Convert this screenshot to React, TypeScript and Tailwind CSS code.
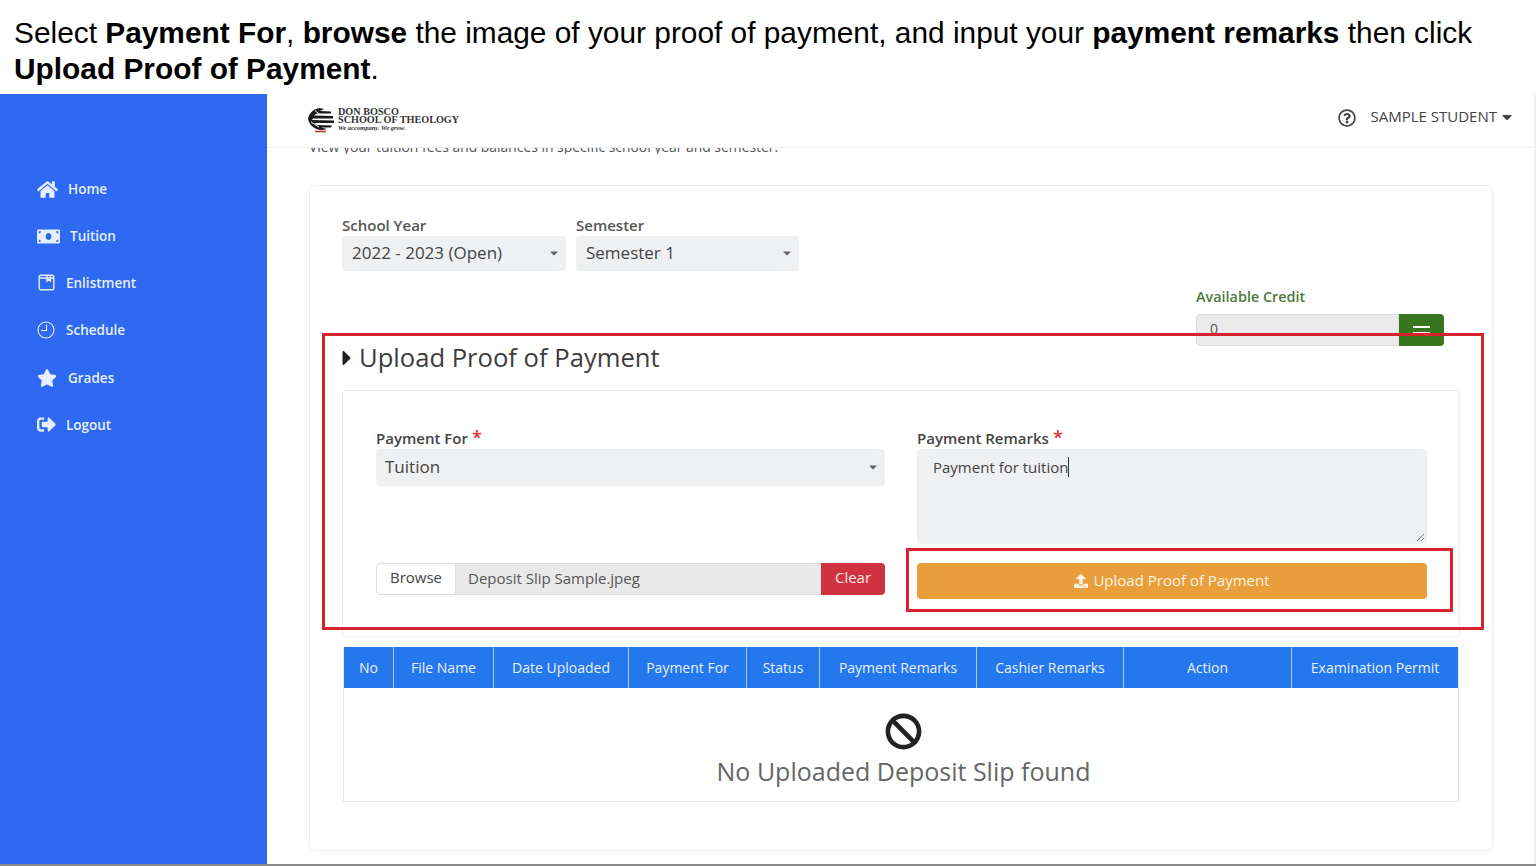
import { FaBan, FaHome, FaMoneyBill, FaSignOutAlt, FaStar, FaRegQuestionCircle, FaCaretDown, FaCaretRight, FaUpload } from "react-icons/fa";

function EnlistIcon() {
  return (
    <svg width="17" height="17" viewBox="0 0 17 17" fill="none" stroke="currentColor" strokeWidth="1.4" className="ml-[1px] -mt-[2px]">
      <rect x="1.2" y="1.2" width="14.6" height="14.6" rx="1.5" />
      <path d="M1.2 4 H15.8 M9 1.2 V7 L10.7 5.6 L12.4 7 V1.2" />
    </svg>
  );
}

function ClockIcon() {
  return (
    <svg width="18" height="18" viewBox="0 0 18 18" fill="none" stroke="currentColor" strokeWidth="1.1" className="-mt-[2px]">
      <circle cx="9" cy="9" r="8" />
      <path d="M9.5 3.5 V9.5 H4" />
    </svg>
  );
}

const navItems = [
  { label: "Home", icon: <FaHome size={21} />, gap: "gap-[10px]" },
  { label: "Tuition", icon: <FaMoneyBill size={23} />, gap: "gap-[10px]" },
  { label: "Enlistment", icon: <EnlistIcon />, gap: "gap-[11px]" },
  { label: "Schedule", icon: <ClockIcon />, gap: "gap-[11px]" },
  { label: "Grades", icon: <FaStar size={20} />, gap: "gap-[11px]" },
  { label: "Logout", icon: <FaSignOutAlt size={19} />, gap: "gap-[10px]" },
];

const columns = [
  { label: "No", w: "w-[50px]" },
  { label: "File Name", w: "w-[100px]" },
  { label: "Date Uploaded", w: "w-[135px]" },
  { label: "Payment For", w: "w-[118px]" },
  { label: "Status", w: "w-[73px]" },
  { label: "Payment Remarks", w: "w-[157px]" },
  { label: "Cashier Remarks", w: "w-[147px]" },
  { label: "Action", w: "w-[168px]" },
  { label: "Examination Permit", w: "flex-1" },
];

function Caret() {
  return <FaCaretDown size={12} className="text-[#666]" />;
}

function Logo() {
  return (
    <div className="flex items-center gap-[4px] -mt-[2px] -ml-[1px]">
      <svg width="27" height="26" viewBox="0 0 27 26">
        <path d="M1 12 C2 6 6 2 13 1 L17 2 L13 4 L24 4.5 L24 6.5 L10 6.5 L6.5 8.5 L26 9 L26 11.5 L6 11.5 L5 13 L27 13.5 L27 16 L7 16 L10 18 L25 18.5 L24 20.5 L14 20.5 L20 22 C12 25 3 21 1 12Z" fill="#1c1c1c" />
        <path d="M8 3.5 L12 7 M4 15 L12 20" stroke="#fff" strokeWidth="1" />
        <path d="M8 24.5 L19 24.5" stroke="#c0392b" strokeWidth="1.6" />
      </svg>
      <div className="flex flex-col font-['Liberation_Serif',serif] font-bold text-[#333] leading-[8px]">
        <span className="text-[10.2px]">DON BOSCO</span>
        <span className="text-[10.2px] whitespace-nowrap">SCHOOL OF THEOLOGY</span>
        <span className="text-[6.5px] italic">We accompany. We grow.</span>
      </div>
    </div>
  );
}

export default function App() {
  return (
    <div className="relative w-[1536px] h-[866px] overflow-hidden bg-white font-['Open_Sans',sans-serif] text-[#444]">
      {/* slide caption */}
      <div className="h-[94px] px-[14px] pt-[15px] font-['Liberation_Sans',sans-serif] text-[29.85px] leading-[36px] text-black whitespace-nowrap">
        Select <b>Payment For</b>, <b>browse</b> the image of your proof of payment, and input your <b>payment remarks</b> then click <br />
        <b>Upload Proof of Payment</b>.
      </div>

      <div className="flex h-[772px]">
        <aside className="w-[267px] shrink-0 bg-[#2f69f2] pl-[37px] pt-[83px] text-white">
          <nav className="flex flex-col gap-[23.2px]">
            {navItems.map((item) => (
              <div key={item.label} className={`flex items-center h-[24px] text-[13.5px] font-semibold text-[#e6eeff] ${item.gap}`}>
                {item.icon}
                <span>{item.label}</span>
              </div>
            ))}
          </nav>
        </aside>

        <main className="flex-1 flex flex-col min-w-0 border-r-2 border-[#f0f0f0]">
          <header className="h-[54px] shrink-0 flex items-center justify-between pl-[41px] pr-[19px] border-b border-[#eeeeee]">
            <Logo />
            <div className="flex items-center mb-[8px] text-[15px] text-[#444]">
              <FaRegQuestionCircle size={18} className="mr-[15px] mt-[2px]" />
              <span>SAMPLE STUDENT</span>
              <FaCaretDown size={16} className="ml-[2px]" />
            </div>
          </header>

          <div className="h-[6px] overflow-hidden pl-[42px]">
            <p className="-mt-[11px] text-[13.9px] leading-[20px] text-[#555]">View your tuition fees and balances in specific school year and semester.</p>
          </div>

          <section className="ml-[42px] mr-[41px] mt-[31px] h-[666px] rounded-[5px] border border-[#eeeeee] px-[32px] pt-[29px]">
            <div className="flex gap-[10px]">
              <div className="w-[224px]">
                <label className="block pb-[1px] text-[15px] font-semibold leading-[20px] text-[#555]">School Year</label>
                <div className="flex h-[35px] items-center justify-between rounded-[4px] bg-[#eff0f2] pb-[1px] pl-[10px] pr-[6px] text-[17px] text-[#444]">
                  2022 - 2023 (Open) <Caret />
                </div>
              </div>
              <div className="w-[223px]">
                <label className="block pb-[1px] text-[15px] font-semibold leading-[20px] text-[#555]">Semester</label>
                <div className="flex h-[35px] items-center justify-between rounded-[4px] bg-[#eff0f2] pb-[1px] pl-[10px] pr-[6px] text-[17px] text-[#444]">
                  Semester 1 <Caret />
                </div>
              </div>
            </div>

            <div className="mt-[16px] ml-[854px] w-[248px]">
              <label className="block text-[14.4px] font-semibold leading-[20px] text-[#4d7a3c]">Available Credit</label>
              <div className="mt-[7px] flex h-[32px]">
                <div className="flex-1 rounded-l-[4px] border border-[#ddd] bg-[#ebebeb] pl-[13px] pt-[3px] text-[14px] text-[#555]">0</div>
                <div className="w-[45px] flex flex-col items-center justify-center gap-[4px] rounded-r-[4px] bg-[#37751f]">
                  <span className="h-[2px] w-[17px] bg-white" />
                  <span className="h-[2px] w-[17px] bg-white" />
                </div>
              </div>
            </div>

            <h2 className="-mt-[4px] flex items-center text-[25.6px] leading-[32px] text-[#3d3d3d]">
              <FaCaretRight size={24} className="-ml-[7px] text-[#222]" />
              Upload Proof of Payment
            </h2>

            <div className="mt-[16px] h-[247px] rounded-[3px] border border-[#eeeeee] pl-[33px] pr-[32px] pt-[36px]">
              <div className="flex gap-[32px]">
                <div className="w-[509px]">
                  <label className="flex items-start gap-[4px] text-[15px] font-semibold leading-[22px] text-[#444]">
                    Payment For <span className="text-[18px] leading-[20px] font-semibold text-[#e03131]">*</span>
                  </label>
                  <div className="flex h-[37px] items-center justify-between rounded-[4px] bg-[#eff0f2] pb-[1px] pl-[9px] pr-[6px] text-[17px] text-[#444]">
                    Tuition <Caret />
                  </div>
                  <div className="mt-[77px] flex h-[32px] text-[15px]">
                    <div className="flex w-[80px] items-center justify-center rounded-l-[4px] border border-[#ddd] bg-white pb-[3px] text-[#444]">Browse</div>
                    <div className="flex flex-1 items-center border-y border-[#ddd] bg-[#e9e9e9] pb-[2px] pl-[12px] text-[#555]">Deposit Slip Sample.jpeg</div>
                    <div className="flex w-[64px] items-center justify-center rounded-r-[4px] bg-[#d13241] pb-[3px] text-[#fde8e8]">Clear</div>
                  </div>
                </div>
                <div className="flex-1">
                  <label className="flex items-start gap-[4px] text-[15px] font-semibold leading-[22px] text-[#444]">
                    Payment Remarks <span className="text-[18px] leading-[20px] font-semibold text-[#e03131]">*</span>
                  </label>
                  <div className="relative h-[95px] rounded-[4px] bg-[#eff0f2] pl-[16px] pt-[8px] text-[15px] leading-[20px] text-[#444]">
                    <span className="border-r border-[#333]">Payment for tuition</span>
                    <svg className="absolute bottom-[2px] right-[2px]" width="9" height="9" viewBox="0 0 9 9">
                      <path d="M1 8 L8 1 M5 8 L8 5" stroke="#777" strokeWidth="1" />
                    </svg>
                  </div>
                  <div className="mt-[19px] flex h-[36px] items-center justify-center gap-[5px] rounded-[4px] bg-[#e99e3c] pb-[1px] text-[15px] text-[#fdf3e3]">
                    <FaUpload size={14} />
                    Upload Proof of Payment
                  </div>
                </div>
              </div>
            </div>

            <div className="mx-[1px] mt-[10px] h-[155px] border border-t-0 border-[#e8e8e8]">
              <div className="flex h-[41px] bg-[#2577ee] text-[14px] text-[#e8f1ff]">
                {columns.map((col) => (
                  <div key={col.label} className={`flex items-center justify-center whitespace-nowrap border-r border-[#a9c9f7] pb-[1px] last:border-r-0 ${col.w}`}>
                    {col.label}
                  </div>
                ))}
              </div>
              <div className="flex flex-col items-center pl-[5px] pt-[25px]">
                <FaBan size={37} className="text-[#222]" />
                <p className="mt-[5px] text-[25px] leading-[32px] text-[#666]">No Uploaded Deposit Slip found</p>
              </div>
            </div>
          </section>
        </main>
      </div>

      {/* red annotation boxes over the screenshot */}
      <div className="absolute left-[322px] top-[333px] h-[297px] w-[1162px] border-[3px] border-[#d8232f]" />
      <div className="absolute left-[906px] top-[548px] h-[64px] w-[547px] border-[3px] border-[#d8232f]" />
      <div className="absolute bottom-0 left-0 h-[2px] w-full bg-[#8a8a8a]" />
    </div>
  );
}
